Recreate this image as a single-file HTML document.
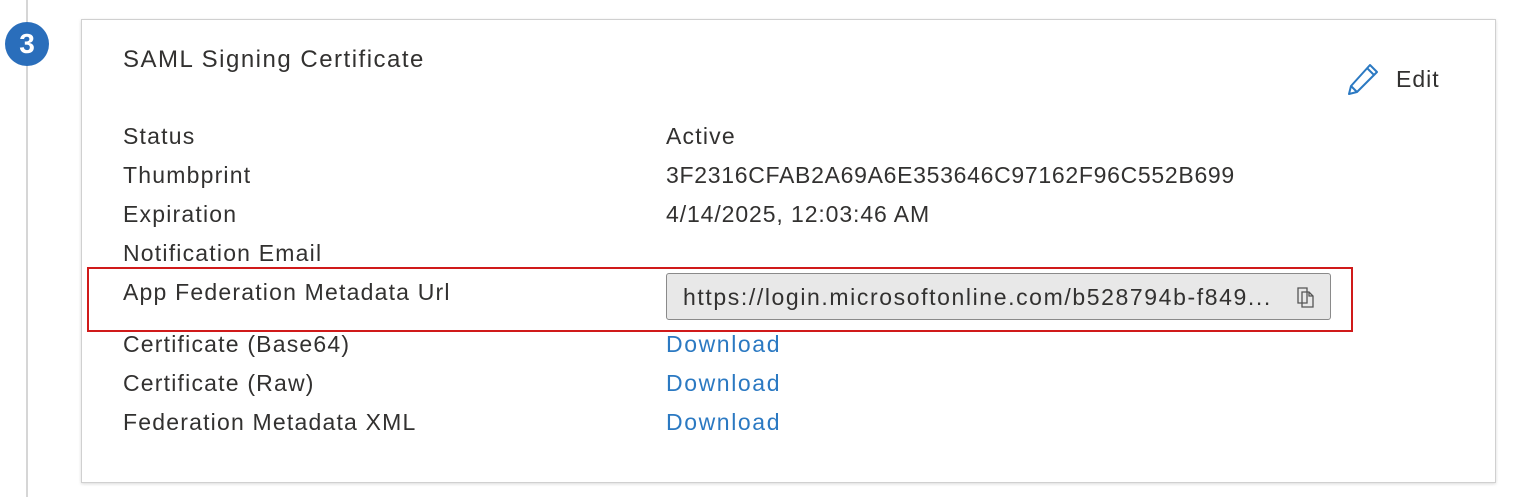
<!DOCTYPE html>
<html><head><style>
body{margin:0;width:1523px;height:497px;background:#fff;position:relative;overflow:hidden;font-family:"Liberation Sans",sans-serif;color:#323130}
.vl{position:absolute;left:26px;top:0;width:2px;height:497px;background:#d6d6d6}
.circ{position:absolute;left:5px;top:22px;width:44px;height:44px;border-radius:50%;background:#2a6ebb;color:#fff;font-weight:bold;font-size:28px;text-align:center;line-height:44px}
.card{position:absolute;left:81px;top:19px;width:1413px;height:462px;border:1px solid #d0d0d0;box-shadow:0 1px 3px rgba(0,0,0,.15)}
.t{position:absolute;font-size:23px;white-space:nowrap;line-height:26px;letter-spacing:1.2px}
.lnk{color:#2b79c2;letter-spacing:1.6px}
.red{position:absolute;left:87px;top:267px;width:1262px;height:61px;border:2px solid #d01a1a}
.inp{position:absolute;left:666px;top:273px;width:663px;height:45px;border:1px solid #8a8a8a;border-radius:3px;background:#e8e8e8}
</style></head><body>
<div class="vl"></div>
<div class="circ">3</div>
<div class="card"></div>
<div class="t" style="left:123px;top:47px;font-size:24px;letter-spacing:1.5px">SAML Signing Certificate</div>
<svg style="position:absolute;left:1346px;top:62px" width="34" height="34" viewBox="0 0 34 34"><path d="M24 3 L31 10 L11 30 L3 32 L5 24 Z M21 6 L28 13 M5 24 L11 30" fill="none" stroke="#2b79c2" stroke-width="2" stroke-linejoin="round"/></svg>
<div class="t" style="left:1396px;top:66px;letter-spacing:1px">Edit</div>
<div class="t" style="left:123px;top:123px">Status</div>
<div class="t" style="left:123px;top:162px">Thumbprint</div>
<div class="t" style="left:123px;top:201px">Expiration</div>
<div class="t" style="left:123px;top:240px">Notification Email</div>
<div class="t" style="left:123px;top:279px">App Federation Metadata Url</div>
<div class="t" style="left:123px;top:331px">Certificate (Base64)</div>
<div class="t" style="left:123px;top:370px">Certificate (Raw)</div>
<div class="t" style="left:123px;top:409px">Federation Metadata XML</div>
<div class="t" style="left:666px;top:123px">Active</div>
<div class="t" style="left:666px;top:162px;letter-spacing:0.7px">3F2316CFAB2A69A6E353646C97162F96C552B699</div>
<div class="t" style="left:666px;top:201px;letter-spacing:0.9px">4/14/2025, 12:03:46 AM</div>
<div class="red"></div>
<div class="inp"></div>
<div class="t" style="left:683px;top:284px;letter-spacing:1.6px">https://login.microsoftonline.com/b528794b-f849...</div>
<svg style="position:absolute;left:1295px;top:285px" width="22" height="24" viewBox="0 0 22 24"><path d="M3 3 H12 V18 H3 Z M7 7 H14 L18 11 V22 H7 Z M14 7 V11 H18" fill="none" stroke="#555" stroke-width="1.3"/></svg>
<div class="t lnk" style="left:666px;top:331px">Download</div>
<div class="t lnk" style="left:666px;top:370px">Download</div>
<div class="t lnk" style="left:666px;top:409px">Download</div>
</body></html>
